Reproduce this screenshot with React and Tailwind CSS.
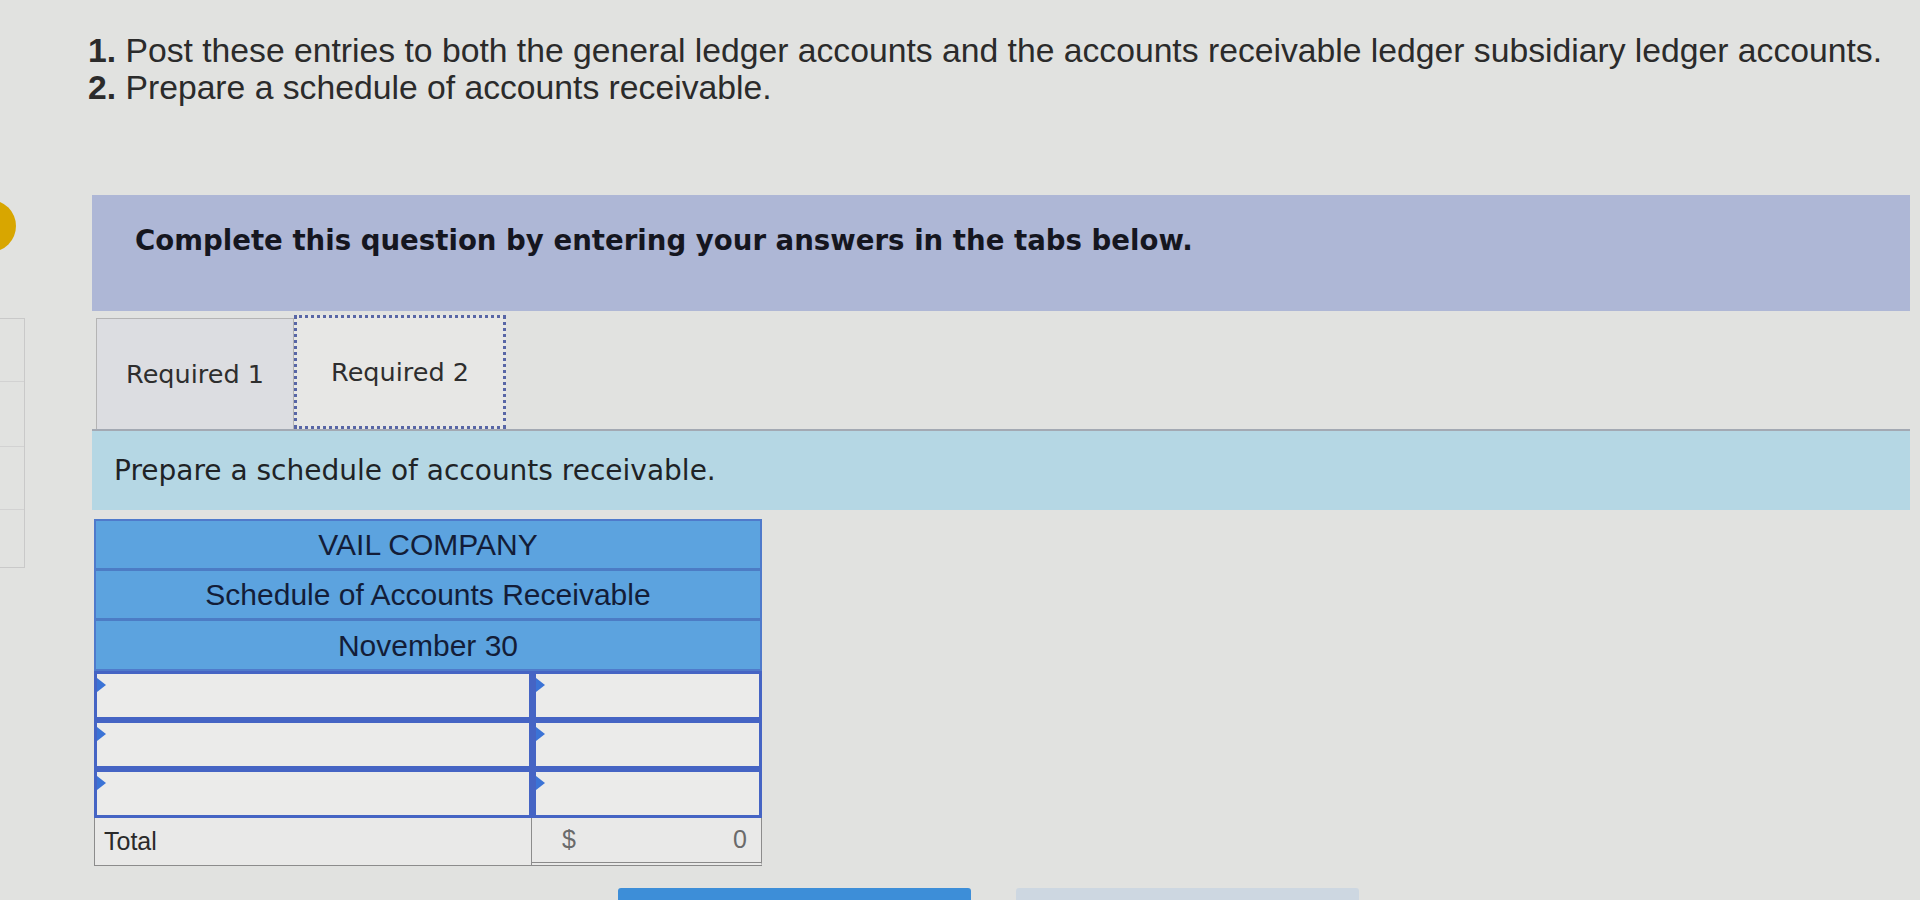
import React from 'react';

function Marker() {
  return (
    <span className="absolute left-0 top-[4px] w-0 h-0 border-y-[7px] border-y-transparent border-l-[9px] border-l-[#3b73d6]" />
  );
}

function InputRow() {
  return (
    <div className="flex h-[49px]">
      <div className="relative w-[438px] bg-[#ebebea] border-[3px] border-[#4564c4]">
        <Marker />
      </div>
      <div className="relative flex-1 bg-[#ebebea] border-[3px] border-l-[4px] border-[#4564c4]">
        <Marker />
      </div>
    </div>
  );
}

export default function App() {
  const rows = [1, 2, 3];

  return (
    <div className="w-[1920px] h-[900px] overflow-hidden bg-[#e1e2e0] flex">
      <div className="w-[88px] shrink-0 flex flex-col">
        <div className="mt-[200px] -ml-[36px] w-[52px] h-[52px] rounded-full bg-[#d8a600]" />
        <div className="mt-[66px] w-[25px] h-[250px] border border-l-0 border-[#c9c9c9] flex flex-col">
          <div className="h-[63px] border-b border-[#d2d2d2]" />
          <div className="h-[65px] border-b border-[#d2d2d2]" />
          <div className="h-[63px] border-b border-[#d2d2d2]" />
        </div>
      </div>

      <div className="flex-1 pr-[10px]">
        <div className="pt-[32px] text-[33.7px] leading-[37px] text-[#2b2b2b] font-['Liberation_Sans',Arial,sans-serif]">
          <p><span className="font-bold">1.</span> Post these entries to both the general ledger accounts and the accounts receivable ledger subsidiary ledger accounts.</p>
          <p><span className="font-bold">2.</span> Prepare a schedule of accounts receivable.</p>
        </div>

        <div className="ml-[4px] mt-[89px] h-[116px] bg-[#aeb7d6] pl-[43px] pt-[31px] font-['DejaVu_Sans',Verdana,sans-serif] text-[27.6px] leading-[30px] font-bold text-[#15161f]">
          Complete this question by entering your answers in the tabs below.
        </div>

        <div className="ml-[4px] mt-[4px] flex h-[116px] border-b-2 border-[#a3a9b3] font-['DejaVu_Sans',Verdana,sans-serif] text-[25.5px] text-[#2e2e2e]">
          <div className="w-[198px] mt-[3px] ml-[4px] bg-[#dcdde1] border border-b-0 border-[#b4b4b4] flex items-center justify-center">
            Required 1
          </div>
          <div className="w-[212px] bg-[#e7e7e5] border-[3px] border-dotted border-[#5866a6] flex items-center justify-center">
            Required 2
          </div>
        </div>

        <div className="ml-[4px] h-[79px] bg-[#b5d7e4] pl-[22px] flex items-center font-['DejaVu_Sans',Verdana,sans-serif] text-[28px] text-[#1f2326]">
          Prepare a schedule of accounts receivable.
        </div>

        <div className="ml-[6px] mt-[9px] w-[668px] font-['Liberation_Sans',Arial,sans-serif] text-[#131d38]">
          <div className="border-2 border-[#4f7acb] bg-[#5ca3df] text-[30px]">
            <div className="h-[50px] flex items-center justify-center border-b-[3px] border-[#4c7cc5]">VAIL COMPANY</div>
            <div className="h-[50px] flex items-center justify-center border-b-[3px] border-[#4c7cc5]">Schedule of Accounts Receivable</div>
            <div className="h-[48px] flex items-center justify-center">November 30</div>
          </div>
          {rows.map((r) => (
            <InputRow key={r} />
          ))}
          <div className="flex h-[48px] text-[25px] text-[#2a2a2a]">
            <div className="w-[438px] bg-[#e9e9e8] border border-t-0 border-[#8c8c8c] pl-[9px] flex items-center">
              Total
            </div>
            <div className="flex-1 bg-[#e9e9e8] border-r border-[#8c8c8c] border-b-[4px] border-b-[#8a8a8a] border-double flex items-center pl-[30px] pr-[14px] justify-between">
              <span className="text-[#6a6a6a]">$</span>
              <span className="text-[#6a6a6a]">0</span>
            </div>
          </div>
        </div>

        <div className="mt-[22px] flex gap-[45px] ml-[530px]">
          <div className="w-[353px] h-[20px] rounded-t-[3px] bg-[#3d8ed8]" />
          <div className="w-[343px] h-[20px] rounded-t-[3px] bg-[#cdd7e1]" />
        </div>
      </div>
    </div>
  );
}
